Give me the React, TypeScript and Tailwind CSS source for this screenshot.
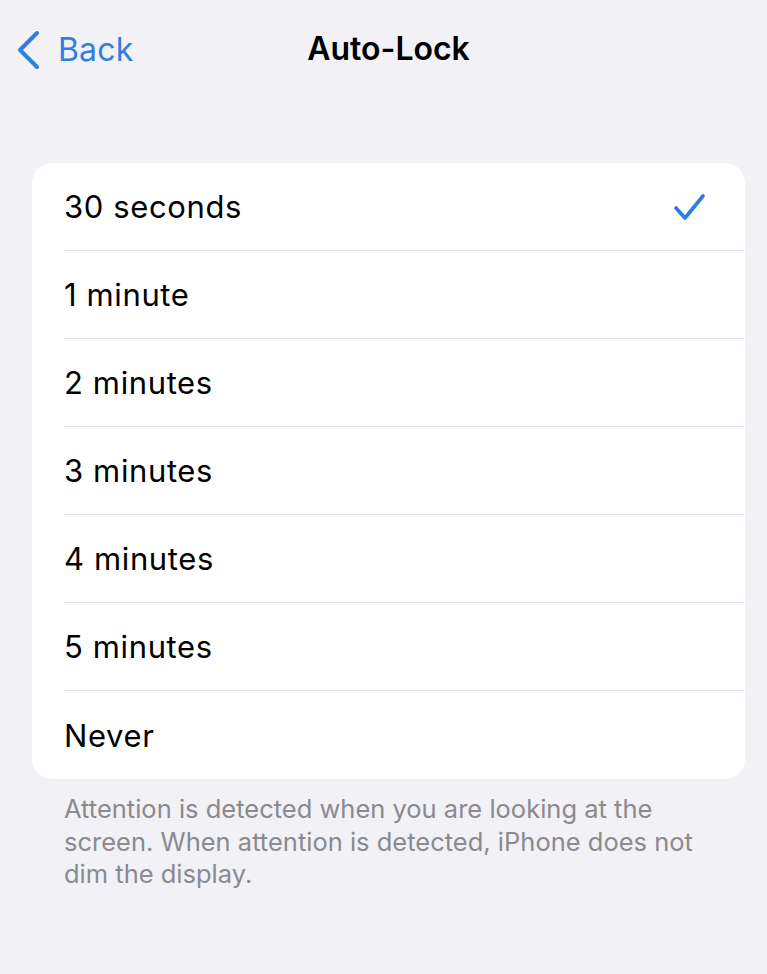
const OPTIONS = ['30 seconds', '1 minute', '2 minutes', '3 minutes', '4 minutes', '5 minutes', 'Never']
const SELECTED = 0

function BackChevron() {
  return (
    <svg width="24" height="40" viewBox="0 0 24 40" fill="none" aria-hidden>
      <path d="M20 3 L3 20 L20 37" stroke="currentColor" strokeWidth="4" strokeLinecap="round" strokeLinejoin="round" />
    </svg>
  )
}

function Tick() {
  return (
    <svg width="34" height="30" viewBox="0 0 34 30" fill="none" aria-hidden>
      <path d="M3 16 L12 26 L30 4" stroke="currentColor" strokeWidth="3.6" strokeLinecap="round" strokeLinejoin="round" />
    </svg>
  )
}

export default function App() {
  return (
    <div className="min-h-[974px] w-full bg-[#f1f1f6] font-['Inter','Noto_Sans',sans-serif] text-black">
      {/* Navigation bar */}
      <header className="relative flex h-[98px] items-center">
        <button type="button" className="flex items-center pl-[17px] pt-[1px] text-[#2f7fe0]">
          <BackChevron />
          <span className="ml-[17px] text-[32px] leading-none tracking-[0.005em]">Back</span>
        </button>
        <h1 className="absolute left-1/2 top-[49px] -translate-x-1/2 -translate-y-1/2 pl-[10px] text-[32px] font-semibold leading-none">
          Auto-Lock
        </h1>
      </header>

      <main className="pl-[32px] pr-[22px] pt-[65px]">
        <ul className="overflow-hidden rounded-[20px] bg-white">
          {OPTIONS.map((label, i) => (
            <li key={label} className="pl-[32px]">
              <div
                className={
                  'flex h-[88px] items-center justify-between pr-[38px] ' +
                  (i < OPTIONS.length - 1 ? 'border-b-[1.5px] border-[#e4e4e8]' : '')
                }
              >
                <span className="text-[31px] leading-none tracking-[0.02em]">{label}</span>
                {i === SELECTED && (
                  <span className="text-[#2a7be2]">
                    <Tick />
                  </span>
                )}
              </div>
            </li>
          ))}
        </ul>

        <p className="mt-[14px] pl-[32px] pr-[50px] text-[25.5px] leading-[32.5px] text-[#8a8a8f]">
          Attention is detected when you are looking at the screen. When attention is detected, iPhone does not dim the
          display.
        </p>
      </main>
    </div>
  )
}
